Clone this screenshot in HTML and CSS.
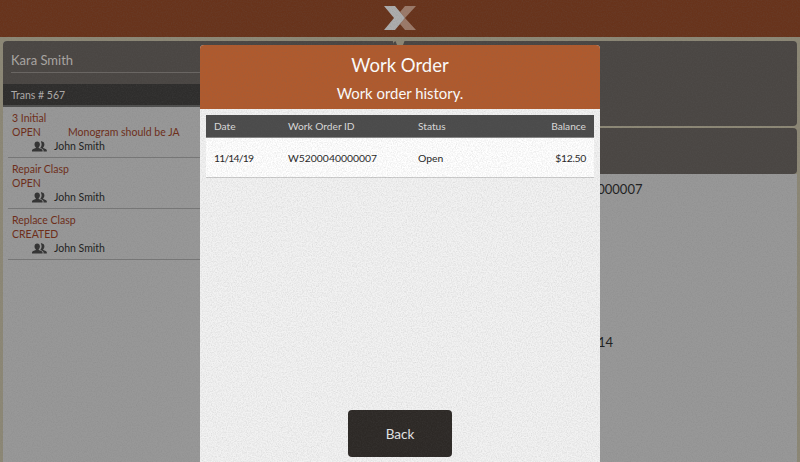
FILE: index.html
```html
<!DOCTYPE html>
<html lang="en">
<head>
<meta charset="utf-8">
<title>Work Order</title>
<link rel="stylesheet" href="styles.css">
</head>
<body>
<svg class="defs" width="0" height="0" aria-hidden="true">
  <symbol id="people" viewBox="0 0 15 11">
    <path d="M5.200 0.400c1.700 0 2.700 1.300 2.700 3 0 1.200-.5 2.200-1.200 2.800v.9c1.900.5 3.700 1.200 3.900 2.300v1.200H0V9.400c.2-1.100 2-1.800 3.800-2.300v-.9C3 5.600 2.500 4.600 2.500 3.400c0-1.700 1-3 2.700-3z"/>
    <path d="M9.800 0.400c1.600 0 2.600 1.300 2.600 3 0 1.200-.5 2.200-1.200 2.800v.8c1.700.5 3.400 1.100 3.600 2.300v1.300h-3.300V9.300c-.2-1-1.300-1.700-3-2.300v-.5c.7-.8 1.100-1.900 1.100-3.100 0-1.100-.2-1.900-.7-2.600.2-.2.6-.8.9-.8z"/>
  </symbol>
</svg>
<div class="app">
  <header class="topbar">
    <svg class="logo" viewBox="0 0 32 24" width="32" height="24" aria-hidden="true">
      <polygon class="logo-back" points="21,0 32,0 21,12 32,24 21,24 16,18 21,12 16,6"/>
      <polygon class="logo-front" points="0,0 11,0 21,12 11,24 0,24 10,12"/>
    </svg>
  </header>
  <svg class="notch" viewBox="0 0 12 8" width="12" height="8" aria-hidden="true"><polygon points="0,0 12,0 9,8 3,8"/></svg>
  <main class="workspace">
    <section class="col col-left">
      <div class="customer"><div class="customer-name">Kara Smith</div></div>
      <div class="trans">Trans # 567</div>
      <ul class="items">
        <li class="item">
          <div>3 Initial</div>
          <div class="item-status"><span class="status">OPEN</span><span>Monogram should be JA</span></div>
          <div class="assoc"><svg class="people"><use href="#people"/></svg><span>John Smith</span></div>
        </li>
        <li class="item">
          <div>Repair Clasp</div>
          <div class="item-status"><span class="status">OPEN</span></div>
          <div class="assoc"><svg class="people"><use href="#people"/></svg><span>John Smith</span></div>
        </li>
        <li class="item">
          <div>Replace Clasp</div>
          <div class="item-status"><span class="status">CREATED</span></div>
          <div class="assoc"><svg class="people"><use href="#people"/></svg><span>John Smith</span></div>
        </li>
      </ul>
    </section>
    <section class="col col-right">
      <div class="panel panel-top"></div>
      <div class="panel panel-second"></div>
      <div class="details">
        <div class="detail-id">W5200040000007</div>
        <div class="detail-date">11/14</div>
      </div>
    </section>
  </main>
</div>
<div class="modal">
  <div class="modal-head">
    <h1>Work Order</h1>
    <p>Work order history.</p>
  </div>
  <div class="modal-body">
    <table class="history">
      <thead>
        <tr><th>Date</th><th>Work Order ID</th><th>Status</th><th class="c-bal">Balance</th></tr>
      </thead>
      <tbody>
        <tr><td class="c-num">11/14/19</td><td>W5200040000007</td><td>Open</td><td class="c-bal c-money">$12.50</td></tr>
      </tbody>
    </table>
    <button class="back" type="button">Back</button>
  </div>
</div>
<svg class="grain" aria-hidden="true">
  <filter id="noise" color-interpolation-filters="sRGB"><feTurbulence type="fractalNoise" baseFrequency="0.8" numOctaves="2" seed="4"/><feColorMatrix values="0 0 0 0 0.4  0 0 0 0 0.4  0 0 0 0 0.4  0.2 0.2 0 0 -0.16"/></filter>
  <rect width="100%" height="100%" filter="url(#noise)"/>
</svg>
</body>
</html>
```
FILE: styles.css
```css
* { box-sizing: border-box; }
html, body { margin: 0; height: 462px; overflow: hidden; }
body { font-family: Lato, "Open Sans", sans-serif; background: #8d8876; color: #222; position: relative; }
.defs { position: absolute; }
.app { height: 462px; display: flex; flex-direction: column; }
.topbar { height: 37px; background: #68331b; display: flex; justify-content: center; align-items: flex-start; padding-top: 6px; flex: none; }
.logo-front { fill: #adadad; }
.logo-back { fill: #9c7a69; }
.notch { position: absolute; left: 394px; top: 37px; fill: #8d8876; z-index: 1; }
.workspace { flex: 1; display: grid; grid-template-columns: 390px 1fr; padding: 4px 3px 0; min-height: 0; }
.col { display: flex; flex-direction: column; min-height: 0; }
.col-left { background: #989898; border-radius: 4px 0 0 0; }
.customer { height: 43px; background: #4a4643; padding: 8px 8px 0; border-radius: 4px 0 0 0; }
.customer-name { color: #aaa7a4; font-size: 13px; line-height: 22px; height: 24px; border-bottom: 1px solid #6a6663; }
.trans { height: 23px; background: #2e2d2c; color: #aeacaa; font-size: 10.500px; line-height: 22px; padding-left: 8px; border-bottom: 2px solid #4e4e4d; }
.items { list-style: none; margin: 0; padding: 0 0 0 5px; }
.item { height: 51px; padding: 4px 0 0 4px; border-bottom: 1px solid #777; color: #6e2c17; font-size: 10.500px; line-height: 14.300px; }
.item-status { display: flex; }
.status { width: 56px; }
.assoc { display: flex; align-items: center; color: #1d1d1d; padding-left: 20px; height: 14px; }
.people { width: 15px; height: 11px; fill: #333; margin-right: 7px; }
.col-right { gap: 2px; background: #8d8876; }
.panel { background: #4a4643; border-radius: 4px; flex: none; }
.panel-top { height: 85px; }
.panel-second { height: 46px; margin-bottom: -2px; }
.details { flex: 1; background: #989898; color: #1e1e1e; font-size: 13px; display: flex; flex-direction: column; }
.detail-id { padding: 7px 0 0 138px; line-height: 16px; }
.detail-date { padding: 137px 0 0 184px; line-height: 16px; }
.modal { position: absolute; left: 200px; top: 45px; width: 400px; height: 417px; background: #f2f2f2; border-radius: 4px 4px 0 0; display: flex; flex-direction: column; z-index: 2; }
.modal-head { height: 64px; background: #b05a2d; border-radius: 4px 4px 0 0; color: #fff; text-align: center; flex: none; }
.modal-head h1 { margin: 0; font-size: 18.500px; font-weight: 400; line-height: 24px; padding-top: 8px; }
.modal-head p { margin: 0; font-size: 14.900px; line-height: 20px; padding-top: 6px; }
.modal-body { flex: 1; padding: 6px 6px 5px; display: flex; flex-direction: column; align-items: center; }
.history { width: 388px; border-collapse: collapse; font-size: 10.400px; table-layout: fixed; }
.history th { background: #4b4b4b; color: #dcdcdc; font-size: 10.200px; font-weight: 400; height: 22px; padding: 0; text-align: left; border-bottom: 1px solid #888; }
.history td { background: #fff; height: 40px; padding: 2px 0 0; color: #1f1f1f; border-bottom: 1px solid #ccc; }
.history th:first-child, .history td:first-child { padding-left: 8px; width: 82px; }
.history th:nth-child(2) { width: 130px; }
.history th:nth-child(3) { width: 100px; }
.history .c-bal { text-align: right; padding-right: 8px; }
.history .c-num { letter-spacing: -0.8px; }
.history .c-money { letter-spacing: -0.3px; }
.back { margin-top: auto; width: 104px; height: 47px; background: #2d2926; color: #e6e6e6; border: 0; border-radius: 4px; font: inherit; font-size: 13.500px; }
.grain { position: absolute; inset: 0; width: 800px; height: 462px; z-index: 3; pointer-events: none; }
```
